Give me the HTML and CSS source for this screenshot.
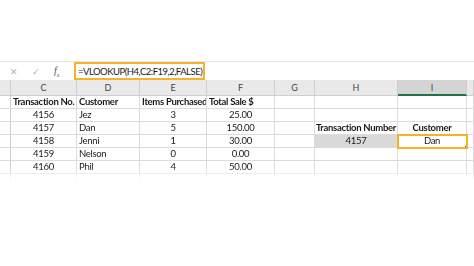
FILE: index.html
```html
<!DOCTYPE html>
<html>
<head>
<meta charset="utf-8">
<link rel="stylesheet" href="styles.css">
</head>
<body>
<div class="sheet">
  <div class="fbar">
    <div class="fbtns">
      <span class="fb-x">&#x2715;</span>
      <span class="fb-ok">&#x2713;</span>
      <span class="fb-fx">f<sub>x</sub></span>
    </div>
    <div class="formula">=VLOOKUP(H4,C2:F19,2,FALSE)</div>
    <div class="fbrest"></div>
  </div>
  <div class="grid">
    <div class="c hd rh"></div><div class="c hd">C</div><div class="c hd">D</div><div class="c hd">E</div><div class="c hd">F</div><div class="c hd">G</div><div class="c hd">H</div><div class="c hd sel">I</div><div class="c hd"></div>

    <div class="c rh"></div><div class="c b l">Transaction No.</div><div class="c b l">Customer</div><div class="c b l">Items Purchased</div><div class="c b l">Total Sale $</div><div class="c"></div><div class="c"></div><div class="c"></div><div class="c"></div>

    <div class="c rh"></div><div class="c m">4156</div><div class="c l">Jez</div><div class="c m">3</div><div class="c m">25.00</div><div class="c"></div><div class="c"></div><div class="c"></div><div class="c"></div>

    <div class="c rh"></div><div class="c m">4157</div><div class="c l">Dan</div><div class="c m">5</div><div class="c m">150.00</div><div class="c"></div><div class="c b m">Transaction Number</div><div class="c b m">Customer</div><div class="c"></div>

    <div class="c rh"></div><div class="c m">4158</div><div class="c l">Jenni</div><div class="c m">1</div><div class="c m">30.00</div><div class="c"></div><div class="c m gray">4157</div><div class="c m active">Dan</div><div class="c"></div>

    <div class="c rh"></div><div class="c m">4159</div><div class="c l">Nelson</div><div class="c m">0</div><div class="c m">0.00</div><div class="c"></div><div class="c"></div><div class="c"></div><div class="c"></div>

    <div class="c rh"></div><div class="c m">4160</div><div class="c l">Phil</div><div class="c m">4</div><div class="c m">50.00</div><div class="c"></div><div class="c"></div><div class="c"></div><div class="c"></div>

    <div class="c rh end"></div><div class="c end"></div><div class="c end"></div><div class="c end"></div><div class="c end"></div><div class="c end"></div><div class="c end"></div><div class="c end"></div><div class="c end"></div>
  </div>
</div>
</body>
</html>
```
FILE: styles.css
```css
html, body {
  margin: 0;
  padding: 0;
  background: #ffffff;
}
body {
  width: 474px;
  height: 266px;
  overflow: hidden;
  font-family: Lato, "Liberation Sans", Arial, sans-serif;
  font-size: 9.5px;
  letter-spacing: -0.3px;
  color: #1a1a1a;
}
.sheet {
  padding-top: 61px;
}
.fbar {
  display: flex;
  height: 19px;
  border-top: 1px solid #e3e3e3;
  box-sizing: border-box;
}
.fbtns {
  width: 74px;
  display: flex;
  align-items: center;
  color: #b0b0b0;
  font-size: 9px;
  letter-spacing: 0;
}
.fb-x { margin-left: 10px; width: 22px; }
.fb-ok { width: 22px; }
.fb-fx {
  font-family: "Liberation Serif", serif;
  font-style: italic;
  color: #555;
  font-size: 10px;
}
.fb-fx sub { font-size: 6px; }
.formula {
  width: 131px;
  height: 18px;
  border: 2px solid #f5b428;
  box-sizing: border-box;
  padding-left: 2px;
  display: flex;
  align-items: center;
  font-size: 9.5px;
  letter-spacing: -0.5px;
  color: #1a1a1a;
}
.fbrest { flex: 1; }
.grid {
  display: grid;
  grid-template-columns: 11px 66px 63px 67px 68px 40px 83px 69px 7px;
  grid-template-rows: 16px repeat(6, 13px) 6px;
  -webkit-mask-image: linear-gradient(to bottom, #000 calc(100% - 12px), transparent 100%);
  mask-image: linear-gradient(to bottom, #000 calc(100% - 12px), transparent 100%);
}
.c {
  box-sizing: border-box;
  border-right: 1px solid #dcdcdc;
  border-bottom: 1px solid #dcdcdc;
  display: flex;
  align-items: center;
  white-space: nowrap;
  overflow: hidden;
  line-height: 1;
}
.c.end { border-bottom: none; }
.hd {
  background: #e9e9e9;
  justify-content: center;
  color: #444;
  font-size: 9px;
  letter-spacing: 0;
  border-right: 1px solid #cfcfcf;
  border-bottom: 1px solid #cfcfcf;
}
.hd.sel {
  background: #d4d4d4;
  border-bottom: 2px solid #217346;
}
.rh { border-right: 1px solid #cfcfcf; }
.b { font-weight: bold; }
.l { padding-left: 2px; }
.m { justify-content: center; }
.gray { background: #d9d9d9; }
.active {
  position: relative;
  outline: 2px solid #f5b428;
  outline-offset: -1px;
  z-index: 1;
}
.active::after {
  content: "";
  position: absolute;
  right: -2px;
  bottom: -2px;
  width: 3px;
  height: 3px;
  background: #217346;
}
```
